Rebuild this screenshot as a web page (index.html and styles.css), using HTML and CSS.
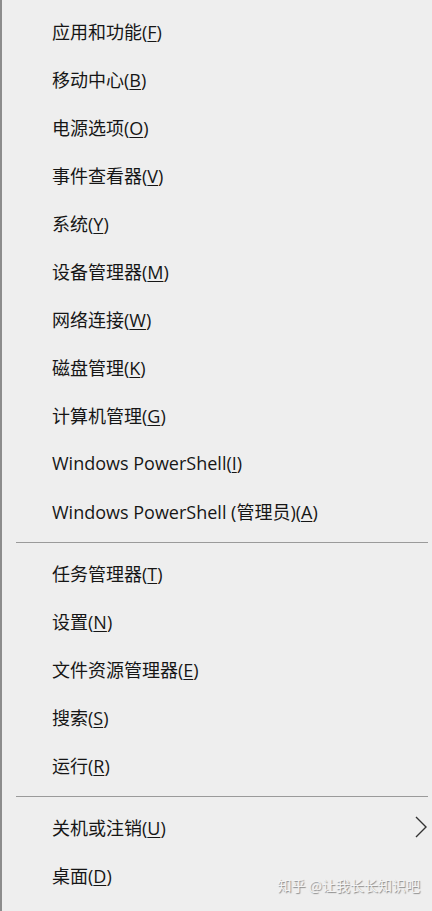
FILE: index.html
```html
<!DOCTYPE html>
<html>
<head>
    <meta charset="utf-8">
    <title>Win+X 菜单</title>
    <link rel="stylesheet" href="styles.css">
</head>
<body>
    <div class="menu">
        <ul class="group">
            <li class="item"><span>应用和功能(<u>F</u>)</span></li>
            <li class="item"><span>移动中心(<u>B</u>)</span></li>
            <li class="item"><span>电源选项(<u>O</u>)</span></li>
            <li class="item"><span>事件查看器(<u>V</u>)</span></li>
            <li class="item"><span>系统(<u>Y</u>)</span></li>
            <li class="item"><span>设备管理器(<u>M</u>)</span></li>
            <li class="item"><span>网络连接(<u>W</u>)</span></li>
            <li class="item"><span>磁盘管理(<u>K</u>)</span></li>
            <li class="item"><span>计算机管理(<u>G</u>)</span></li>
            <li class="item"><span>Windows PowerShell(<u>I</u>)</span></li>
            <li class="item"><span>Windows PowerShell (管理员)(<u>A</u>)</span></li>
        </ul>
        <div class="sep"></div>
        <ul class="group">
            <li class="item"><span>任务管理器(<u>T</u>)</span></li>
            <li class="item"><span>设置(<u>N</u>)</span></li>
            <li class="item"><span>文件资源管理器(<u>E</u>)</span></li>
            <li class="item"><span>搜索(<u>S</u>)</span></li>
            <li class="item"><span>运行(<u>R</u>)</span></li>
        </ul>
        <div class="sep"></div>
        <ul class="group">
            <li class="item">
                <span>关机或注销(<u>U</u>)</span>
                <svg class="chevron" width="14" height="22" viewBox="0 0 14 22">
                    <polyline points="2,1 12,11 2,21" fill="none" stroke="#333" stroke-width="1.4"/>
                </svg>
            </li>
            <li class="item"><span>桌面(<u>D</u>)</span></li>
        </ul>
        <div class="watermark">知乎 @让我长长知识吧</div>
    </div>
</body>
</html>
```

FILE: styles.css
```css
html, body {
    margin: 0;
    padding: 0;
    height: 100%;
}
body {
    background-color: #eeeeee;
    font-family: "Open Sans", "Noto Sans CJK SC", sans-serif;
    color: #161616;
}
.menu {
    position: relative;
    box-sizing: border-box;
    height: 911px;
    padding-top: 7px;
    border-left: 2px solid #8c8c8c;
}
.group {
    list-style: none;
    margin: 0;
    padding: 0;
}
.item {
    display: flex;
    align-items: center;
    justify-content: space-between;
    height: 48px;
    padding-left: 50px;
    padding-right: 4px;
    font-size: 18px;
}
.item u {
    text-underline-offset: 2px;
}
.sep {
    height: 1px;
    margin: 7px 4px 6px 14px;
    background-color: #9a9a9a;
}
.chevron {
    display: block;
}
.watermark {
    position: absolute;
    right: 12px;
    bottom: 16px;
    font-size: 14px;
    font-family: "Noto Sans CJK SC", sans-serif;
    color: #f4f4f4;
    text-shadow: 1px 1px 1px #8a8a8a;
}
```
